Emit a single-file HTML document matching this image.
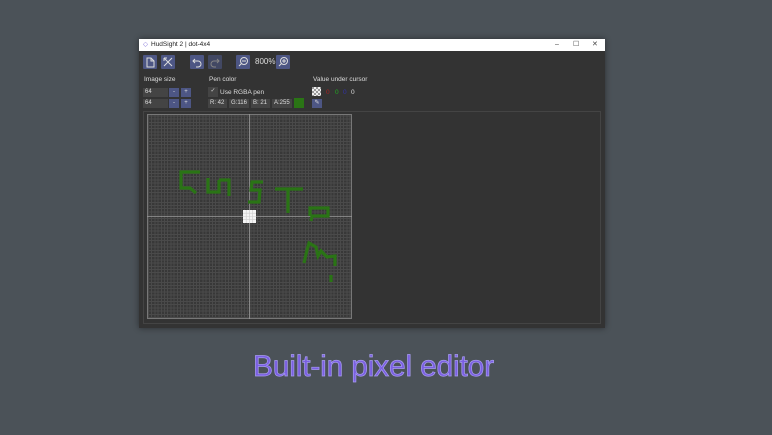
<!DOCTYPE html>
<html><head><meta charset="utf-8"><style>
*{margin:0;padding:0;box-sizing:border-box}
body{width:772px;height:435px;background:#4b5258;position:relative;overflow:hidden;font-family:"Liberation Sans",sans-serif}
.win{position:absolute;left:139px;top:39px;width:466px;height:289px;background:#333;box-shadow:0 0 6px rgba(0,0,0,.45)}
.title{height:12px;background:#fff;font-size:6.5px;color:#222;line-height:12px;padding-left:12px;position:relative}
.title .ctl{position:absolute;top:0;font-size:7px;color:#444}
.btn{position:absolute;width:14px;height:14px;background:#4d5684;border-radius:1px}
.lbl{position:absolute;font-size:6.5px;color:#ddd}
.fld{position:absolute;height:9px;background:#444;font-size:6px;color:#ddd;line-height:9px;padding-left:2px}
.sb{position:absolute;width:10px;height:9px;background:#4d5684;color:#ddd;font-size:6px;line-height:9px;text-align:center}
.panel{position:absolute;left:4px;top:72px;width:458px;height:213px;border:1px solid #444}
.cv{position:absolute;left:147px;top:114px;width:205px;height:205px;border:1px solid #777;background-color:#383838;
background-image:repeating-linear-gradient(90deg,#4a4a4a 0 1px,transparent 1px 3.2px),repeating-linear-gradient(0deg,#4a4a4a 0 1px,transparent 1px 3.2px)}
.cap{position:absolute;left:253px;top:350px;white-space:nowrap;font-size:30px;color:#7b60e2;-webkit-text-stroke:0.7px #a79cf0;letter-spacing:-0.2px}
</style></head><body>
<div class="win">
 <div class="title"><span style="position:absolute;left:4px;color:#7a6ad8">◇</span>HudSight 2 | dot-4x4
  <span class="ctl" style="left:416px">–</span><span class="ctl" style="left:434px">☐</span><span class="ctl" style="left:453px">✕</span></div>
 <div class="btn" style="left:4px;top:16px"><svg width="14" height="14"><path d="M4 3h4l3 3v6H4z M8 3v3h3" fill="none" stroke="#ddd" stroke-width="1"/></svg></div>
 <div class="btn" style="left:22px;top:16px"><svg width="14" height="14"><path d="M3 3l8 8M11 3l-8 8M3 3h3M3 3v3" fill="none" stroke="#ddd" stroke-width="1"/></svg></div>
 <div class="btn" style="left:51px;top:16px"><svg width="14" height="14"><path d="M5 4L3 6l2 2M3 6h5a3 3 0 010 6H6" fill="none" stroke="#ddd" stroke-width="1"/></svg></div>
 <div class="btn" style="left:69px;top:16px;opacity:.6"><svg width="14" height="14"><path d="M9 4l2 2-2 2M11 6H6a3 3 0 000 6h2" fill="none" stroke="#bbb" stroke-width="1"/></svg></div>
 <div class="btn" style="left:97px;top:16px"><svg width="14" height="14"><circle cx="8" cy="6" r="3.5" fill="none" stroke="#ddd"/><path d="M6 6h4M5.5 8.5L3 11" stroke="#ddd"/></svg></div>
 <div class="lbl" style="left:116px;top:18px;font-size:8px">800%</div>
 <div class="btn" style="left:137px;top:16px"><svg width="14" height="14"><circle cx="8" cy="6" r="3.5" fill="none" stroke="#ddd"/><path d="M6 6h4M8 4v4M5.5 8.5L3 11" stroke="#ddd"/></svg></div>
 <div class="lbl" style="left:5px;top:37px">Image size</div>
 <div class="fld" style="left:4px;top:49px;width:25px">64</div><div class="sb" style="left:30px;top:49px">-</div><div class="sb" style="left:42px;top:49px">+</div>
 <div class="fld" style="left:4px;top:60px;width:25px">64</div><div class="sb" style="left:30px;top:60px">-</div><div class="sb" style="left:42px;top:60px">+</div>
 <div class="lbl" style="left:70px;top:37px">Pen color</div>
 <div class="fld" style="left:69px;top:48px;width:10px;height:10px;padding:0;text-align:center;color:#ccc">✓</div>
 <div class="lbl" style="left:81px;top:50px">Use RGBA pen</div>
 <div class="fld" style="left:69px;top:60px;width:19px">R: 42</div>
 <div class="fld" style="left:90px;top:60px;width:20px">G:116</div>
 <div class="fld" style="left:112px;top:60px;width:19px">B: 21</div>
 <div class="fld" style="left:133px;top:60px;width:20px">A:255</div>
 <div style="position:absolute;left:155px;top:59px;width:10px;height:10px;background:#2a7415"></div>
 <div class="lbl" style="left:174px;top:37px">Value under cursor</div>
 <div style="position:absolute;left:173px;top:48px;width:9px;height:9px;background:repeating-conic-gradient(#eee 0 25%,#999 0 50%) 0 0/4px 4px"></div>
 <div class="lbl" style="left:187px;top:50px;color:#a22">0</div><div class="lbl" style="left:196px;top:50px;color:#2a2">0</div><div class="lbl" style="left:204px;top:50px;color:#33a">0</div><div class="lbl" style="left:212px;top:50px">0</div>
 <div class="sb" style="left:173px;top:60px;width:10px;height:9px">✎</div>
 <div class="panel"></div>
</div>
<div class="cv"></div>
<svg style="position:absolute;left:0;top:0" width="772" height="435">
 <path d="M249.5 114V319M147 216.5H352" stroke="#999" stroke-width="0.8"/>
 <g fill="none" stroke="#2a7415" stroke-width="3.2" stroke-linejoin="miter">
  <path d="M200 172H181V188H190L196 193"/>
  <path d="M208 178V192H219V180M219 180H229V196"/>
  <path d="M263 182H252L251 190H260L259 202H248"/>
  <path d="M275 189H303M288 189V213"/>
  <path d="M310 216V208H328V216H312L311 221"/>
  <path d="M304 263L307 250L309 243L316 247L318 256L321 251L327 257L335 256V266M331 275V282"/>
 </g>
 <rect x="243" y="210" width="13" height="13" fill="#f4f4f4"/>
 <path d="M246.2 210v13M249.5 210v13M252.7 210v13M243 213.2h13M243 216.5h13M243 219.7h13" stroke="#ccc" stroke-width="0.6"/>
</svg>
<div class="cap">Built-in pixel editor</div>
</body></html>
